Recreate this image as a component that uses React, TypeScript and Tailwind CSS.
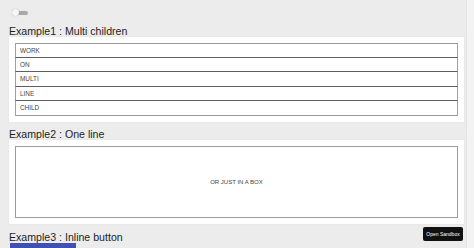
import React from "react";

const rows = [
  { label: "WORK", h: "h-[15px]" },
  { label: "ON", h: "h-[14px]" },
  { label: "MULTI", h: "h-[15px]" },
  { label: "LINE", h: "h-[14px]" },
  { label: "CHILD", h: "h-[15px]" },
];

const Heading = ({ children }: { children: React.ReactNode }) => (
  <h2 className="text-[10.6px] leading-[12px] text-[#1e1e1e] font-normal">{children}</h2>
);

const Panel = ({ children }: { children: React.ReactNode }) => (
  <div className="bg-white p-[6px] shadow-[0_0_1px_rgba(0,0,0,0.08)]">{children}</div>
);

export default function App() {
  return (
    <div
      className="relative flex h-[248px] overflow-hidden bg-[#ececec]"
      style={{ fontFamily: '"Liberation Sans", Arial, sans-serif' }}
    >
      <div className="flex-1 pl-[9px] pr-[2px]">
        {/* switch */}
        <div className="h-[25px] flex items-center pl-[3px]">
          <div className="relative w-[14px] h-[4px] rounded-full bg-[#a9a9a9] ml-[2px]">
            <div className="absolute -left-[2px] -top-[2px] w-[7px] h-[7px] rounded-full bg-[#f7f7f7] shadow-[0_0_1px_rgba(0,0,0,0.35)]" />
          </div>
        </div>

        <Heading>Example1 : Multi children</Heading>
        <Panel>
          <div className="flex flex-col">
            {rows.map((r, i) => (
              <div
                key={r.label}
                className={`${r.h} flex items-center pl-[4px] border-x border-b border-x-[#a0a0a0] border-b-[#5f5f5f] ${
                  i === 0 ? "border-t border-t-[#9a9a9a]" : ""
                } ${i === rows.length - 1 ? "border-b-[#9a9a9a]" : ""} text-[6.4px] text-[#444] uppercase`}
              >
                {r.label}
              </div>
            ))}
          </div>
        </Panel>

        <div className="mt-[6px]">
          <Heading>Example2 : One line</Heading>
        </div>
        <Panel>
          <div className="h-[72px] border border-[#9c9c9c] flex items-center justify-center text-[6px] text-[#444] uppercase">
            OR JUST IN A BOX
          </div>
        </Panel>

        <div className="mt-[7px]">
          <Heading>Example3 : Inline button</Heading>
        </div>
        <div className="mt-0 ml-[1px] w-[66px] h-[14px] bg-[#3f51b5]" />
      </div>

      {/* scrollbar strip */}
      <div className="w-[8px] bg-[#f3f3f3] border-l border-[#e4e4e4]" />

      <button className="absolute right-[11px] bottom-[7px] w-[40px] h-[14px] rounded-[2px] bg-[#111] text-white text-[5px] leading-none flex items-center justify-center">
        Open Sandbox
      </button>
    </div>
  );
}
